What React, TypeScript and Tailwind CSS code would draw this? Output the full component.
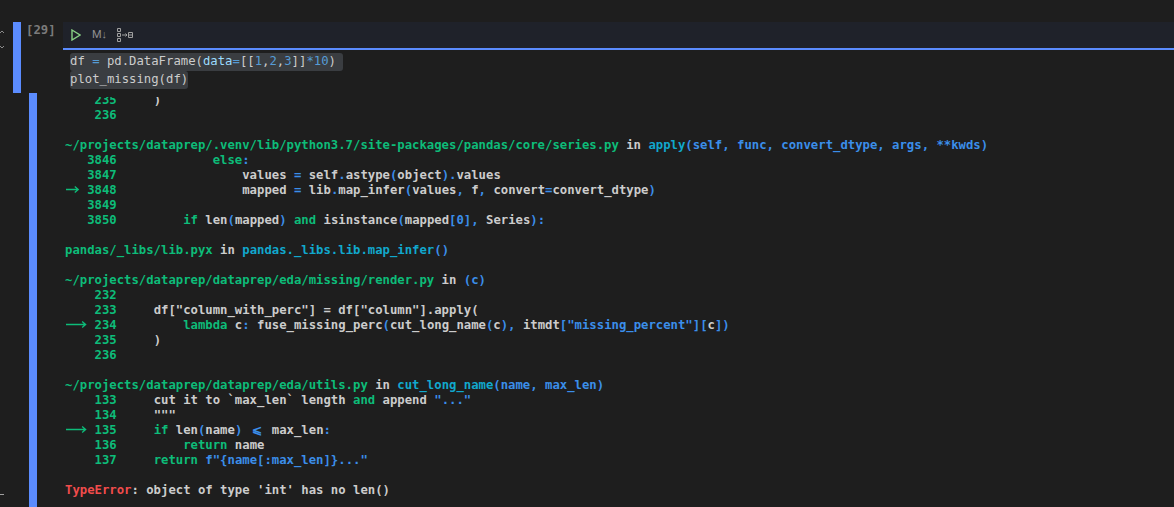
import React from "react";

type Seg = [string, "g" | "b" | "c" | "w" | "r" | "le"];

const tone = {
  g: "text-[#0dbc79]",
  b: "text-[#3b8eea]",
  c: "text-[#11a8cd]",
  w: "text-[#cccccc]",
  r: "text-[#f14c4c]",
  le: "inline-block w-[2ch] text-center text-[#3b8eea]",
};

const Arrow = ({ cols }: { cols: number }) => (
  <svg
    className="inline-block align-baseline"
    style={{ width: `${cols}ch`, height: 9 }}
    viewBox={`0 0 ${cols * 7.39} 9`}
  >
    <path
      d={`M1 4.5H${cols * 7.39 - 1.5}M${cols * 7.39 - 5} 1.5L${cols * 7.39 - 1.5} 4.5L${cols * 7.39 - 5} 7.5`}
      fill="none"
      stroke="#0dbc79"
      strokeWidth="1.3"
    />
  </svg>
);

const Line = ({ segs = [], arrow = 0 }: { segs?: Seg[]; arrow?: number }) => (
  <div className="h-[15px] leading-[15px] whitespace-pre">
    {arrow > 0 && <Arrow cols={arrow} />}
    {segs.map(([text, color], i) => (
      <span key={i} className={tone[color]}>
        {text}
      </span>
    ))}
  </div>
);

const output: { segs?: Seg[]; arrow?: number }[] = [
  { segs: [["    235", "g"], ["     )", "w"]] },
  { segs: [["    236", "g"]] },
  {},
  {
    segs: [
      ["~/projects/dataprep/.venv/lib/python3.7/site-packages/pandas/core/series.py", "g"],
      [" in ", "w"],
      ["apply", "c"],
      ["(self, func, convert_dtype, args, **kwds)", "b"],
    ],
  },
  { segs: [["   3846", "g"], ["             ", "w"], ["else", "g"], [":", "b"]] },
  {
    segs: [
      ["   3847", "g"],
      ["                 values ", "w"],
      ["=", "b"],
      [" self", "w"],
      [".", "b"],
      ["astype", "w"],
      ["(", "b"],
      ["object", "w"],
      [").", "b"],
      ["values", "w"],
    ],
  },
  {
    arrow: 2,
    segs: [
      [" 3848", "g"],
      ["                 mapped ", "w"],
      ["=", "b"],
      [" lib", "w"],
      [".", "b"],
      ["map_infer", "w"],
      ["(", "b"],
      ["values", "w"],
      [",", "b"],
      [" f", "w"],
      [",", "b"],
      [" convert", "w"],
      ["=", "b"],
      ["convert_dtype", "w"],
      [")", "b"],
    ],
  },
  { segs: [["   3849", "g"]] },
  {
    segs: [
      ["   3850", "g"],
      ["         ", "w"],
      ["if", "g"],
      [" len", "w"],
      ["(", "b"],
      ["mapped", "w"],
      [")", "b"],
      [" and", "g"],
      [" isinstance", "w"],
      ["(", "b"],
      ["mapped", "w"],
      ["[0]", "b"],
      [",", "b"],
      [" Series", "w"],
      ["):", "b"],
    ],
  },
  {},
  {
    segs: [
      ["pandas/_libs/lib.pyx", "g"],
      [" in ", "w"],
      ["pandas._libs.lib.map_infer", "c"],
      ["()", "b"],
    ],
  },
  {},
  {
    segs: [
      ["~/projects/dataprep/dataprep/eda/missing/render.py", "g"],
      [" in ", "w"],
      ["(c)", "b"],
    ],
  },
  { segs: [["    232", "g"]] },
  { segs: [["    233", "g"], ['     df["column_with_perc"] = df["column"].apply(', "w"]] },
  {
    arrow: 3,
    segs: [
      [" 234", "g"],
      ["         ", "w"],
      ["lambda", "g"],
      [" c", "w"],
      [":", "b"],
      [" fuse_missing_perc", "w"],
      ["(", "b"],
      ["cut_long_name", "w"],
      ["(", "b"],
      ["c", "w"],
      ["),", "b"],
      [" itmdt", "w"],
      ['["missing_percent"][', "b"],
      ["c", "w"],
      ["])", "b"],
    ],
  },
  { segs: [["    235", "g"], ["     )", "w"]] },
  { segs: [["    236", "g"]] },
  {},
  {
    segs: [
      ["~/projects/dataprep/dataprep/eda/utils.py", "g"],
      [" in ", "w"],
      ["cut_long_name", "c"],
      ["(name, max_len)", "b"],
    ],
  },
  {
    segs: [
      ["    133", "g"],
      ["     cut it to `max_len` length ", "w"],
      ["and", "g"],
      [" append ", "w"],
      ['"..."', "b"],
    ],
  },
  { segs: [["    134", "g"], ['     """', "w"]] },
  {
    arrow: 3,
    segs: [
      [" 135", "g"],
      ["     ", "w"],
      ["if", "g"],
      [" len", "w"],
      ["(", "b"],
      ["name", "w"],
      [")", "b"],
      [" ", "w"],
      ["⩽", "le"],
      [" ", "w"],
      ["max_len", "w"],
      [":", "b"],
    ],
  },
  { segs: [["    136", "g"], ["         ", "w"], ["return", "g"], [" name", "w"]] },
  { segs: [["    137", "g"], ["     ", "w"], ["return", "g"], [' f"{name[:max_len]}..."', "b"]] },
  {},
  { segs: [["TypeError", "r"], [": object of type 'int' has no len()", "w"]] },
];

export default function App() {
  return (
    <div className="relative h-[507px] w-full overflow-hidden bg-[#1e1e1e] pt-[22px] font-['DejaVu_Sans_Mono',monospace] text-[12.27px] text-[#cccccc]">
      {/* collapsed cell chevrons, cut off by the window edge */}
      <svg className="absolute left-0 top-[28px] h-[24px] w-[5px]" viewBox="0 0 5 24">
        <path d="M0 5L2 3L4 5M0 18L2 20L4 18" fill="none" stroke="#8a8a8a" strokeWidth="1" />
      </svg>
      <div className="absolute left-0 top-[494px] h-px w-[4px] bg-[#a0a0a0]" />

      <div className="flex h-[71px]">
        <div className="ml-[13px] w-2 bg-[#5b8cff]" />
        <div className="w-[42px] pl-[5px] pt-[1px] font-bold leading-[15px] text-[#7b7b7b]">[29]</div>
        <div className="flex-1">
          <div className="flex h-[28px] items-center border-b-2 border-[#5b8cff] bg-[#1f222a] pl-[8px]">
            <svg className="h-[12px] w-[10px]" viewBox="0 0 10 12">
              <path d="M1 1L9 6L1 11Z" fill="none" stroke="#89d185" strokeWidth="1.4" />
            </svg>
            <span className="ml-[11px] font-['Roboto',sans-serif] text-[11px] text-[#8f8f8f]">M↓</span>
            <svg className="ml-[10px] h-[14px] w-[16px]" viewBox="0 0 16 14">
              <path
                d="M.5 .5h3v3h-3zM.5 5.5h3v3h-3zM.5 10.5h3v3h-3zM5 7h5M8.5 5.5l1.5 1.5l-1.5 1.5M11.5 4.5h4v5h-4zM11.5 7h4"
                fill="none"
                stroke="#a0a0a0"
                strokeWidth="1"
              />
            </svg>
          </div>
          <div className="pl-[7px] pt-[2px] whitespace-pre">
            <div className="h-[18px]">
              <span className="inline-block h-[18px] rounded-[3px] bg-[#3a3d41] pr-[7px] leading-[16px]">
                df <span className="text-[#569cd6]">=</span> pd.DataFrame(
                <span className="text-[#9cdcfe]">data</span>
                <span className="text-[#569cd6]">=</span>[[
                <span className="text-[#569cd6]">1</span>,<span className="text-[#569cd6]">2</span>,
                <span className="text-[#569cd6]">3</span>]]
                <span className="text-[#569cd6]">*10</span>)
              </span>
            </div>
            <div className="h-[18px]">
              <span className="inline-block h-[18px] rounded-[3px] bg-[#3a3d41] leading-[16px]">plot_missing(df)</span>
            </div>
          </div>
        </div>
      </div>

      <div className="flex h-[414px]">
        <div className="ml-[29px] w-2 bg-[#5b8cff]" />
        <div className="flex-1 pl-[28px] pt-[4px]">
          <div className="h-[410px] overflow-hidden font-bold">
            <div className="-mt-[4px]">
              {output.map((row, i) => (
                <Line key={i} segs={row.segs} arrow={row.arrow} />
              ))}
            </div>
          </div>
        </div>
      </div>
    </div>
  );
}
